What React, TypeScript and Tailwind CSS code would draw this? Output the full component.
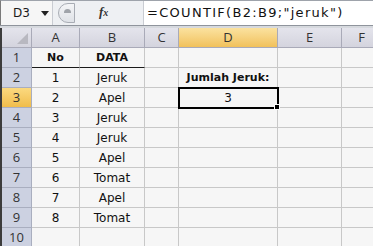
import React from "react";

const cols = [30, 48, 65, 34, 99, 64, 40];
const letters = ["", "A", "B", "C", "D", "E", "F"];
const data: [string, string][] = [
  ["No", "DATA"],
  ["1", "Jeruk"],
  ["2", "Apel"],
  ["3", "Jeruk"],
  ["4", "Jeruk"],
  ["5", "Apel"],
  ["6", "Tomat"],
  ["7", "Apel"],
  ["8", "Tomat"],
  ["", ""],
];

export default function App() {
  const grid = { gridTemplateColumns: cols.map((c) => c + "px").join(" ") };
  return (
    <div className="w-[373px] h-[246px] overflow-hidden bg-[#f6f6f6]" style={{ fontFamily: "'DejaVu Sans', sans-serif" }}>
      {/* formula bar */}
      <div className="h-[25px] flex items-stretch bg-[#eef0f3] border-t border-[#9ea3ab] border-l border-l-[#7a7a7a]">
        <div className="w-[52px] flex items-center justify-between pl-[12px] pr-[3px] text-[12px] text-[#1a1a1a] bg-[#f6f6f6] border-r border-[#c9ccd2]">
          <span>D3</span>
          <svg width="8" height="5" viewBox="0 0 8 5"><path d="M0 0H8L4 5Z" fill="#222" /></svg>
        </div>
        <div className="w-[90px] flex items-center pl-[5px] gap-[24px]">
          <div className="w-[17px] h-[20px] rounded-l-full border border-[#a8acb4] bg-gradient-to-b from-[#f4f5f7] to-[#dfe2e7] flex items-start justify-center pt-[5px] pl-[2px]">
            <div className="w-[7px] h-[4px] rounded-t-full bg-[#a0a4aa]" />
          </div>
          <span className="text-[13px] italic font-bold text-[#333] pb-[2px]" style={{ fontFamily: "'Liberation Serif', serif" }}>
            f<span className="text-[10px]">x</span>
          </span>
        </div>
        <div className="flex-1 bg-white border-l border-[#c9ccd2] flex items-center pl-[3px] text-[13px] tracking-[1.3px] text-[#111] whitespace-nowrap">
          =COUNTIF(B2:B9;"jeruk")
        </div>
      </div>
      <div className="h-[3px] bg-[#d6d9de] border-t border-[#8f949c]" />
      {/* grid */}
      <div className="grid border-l-2 border-[#3c3c3c]" style={grid}>
        {letters.map((l, i) => (
          <div
            key={"h" + i}
            className={
              "h-[20px] flex items-end justify-end text-[13px] text-[#333] border-r border-b border-[#a9aab8] " +
              (i === 4 ? "bg-gradient-to-b from-[#fbe29f] to-[#f1c15a]" : "bg-gradient-to-b from-[#e4e4ec] to-[#d4d4de]")
            }
            style={{ fontFamily: "'Open Sans', sans-serif" }}
          >
            {i === 0 ? (
              <svg className="mr-[3px] mb-[3px]" width="11" height="11" viewBox="0 0 11 11"><path d="M11 0V11H0Z" fill="#b8b8c0" /></svg>
            ) : (
              <span className="w-full h-full flex items-center justify-center">{l}</span>
            )}
          </div>
        ))}
        {data.map((row, r) => (
          <React.Fragment key={"r" + r}>
            <div
              className={
                "h-[20px] flex items-center justify-center text-[13px] text-[#333] border-r border-b border-[#a9aebf] " +
                (r === 2 ? "bg-gradient-to-b from-[#fbd97f] to-[#f0bd4a]" : "bg-[#ccd1e1]")
              }
              style={{ fontFamily: "'Open Sans', sans-serif" }}
            >
              {r + 1}
            </div>
            {[0, 1, 2, 3, 4, 5].map((c) => {
              let content = "";
              if (c === 0) content = row[0];
              if (c === 1) content = row[1];
              if (c === 3 && r === 1) content = "Jumlah Jeruk:";
              if (c === 3 && r === 2) content = "3";
              const bold = r === 0 || (c === 3 && r === 1);
              const dark = r === 0 && c < 2;
              const active = c === 3 && r === 2;
              return (
                <div
                  key={c}
                  className={
                    "h-[20px] flex items-center justify-center whitespace-nowrap text-[#111] border-r border-[#c8c8c8] relative " +
                    (dark ? "border-b border-b-[#1a1a1a] " : "border-b ") +
                    (bold ? "font-bold text-[11px] pt-[1px] " : "text-[12px] ") +
                    (active ? "outline-2 outline-black -outline-offset-1 z-10" : "")
                  }
                >
                  {content}
                  {active && <div className="absolute right-[-3px] bottom-[-3px] w-[6px] h-[6px] bg-black border border-white" />}
                </div>
              );
            })}
          </React.Fragment>
        ))}
      </div>
    </div>
  );
}
